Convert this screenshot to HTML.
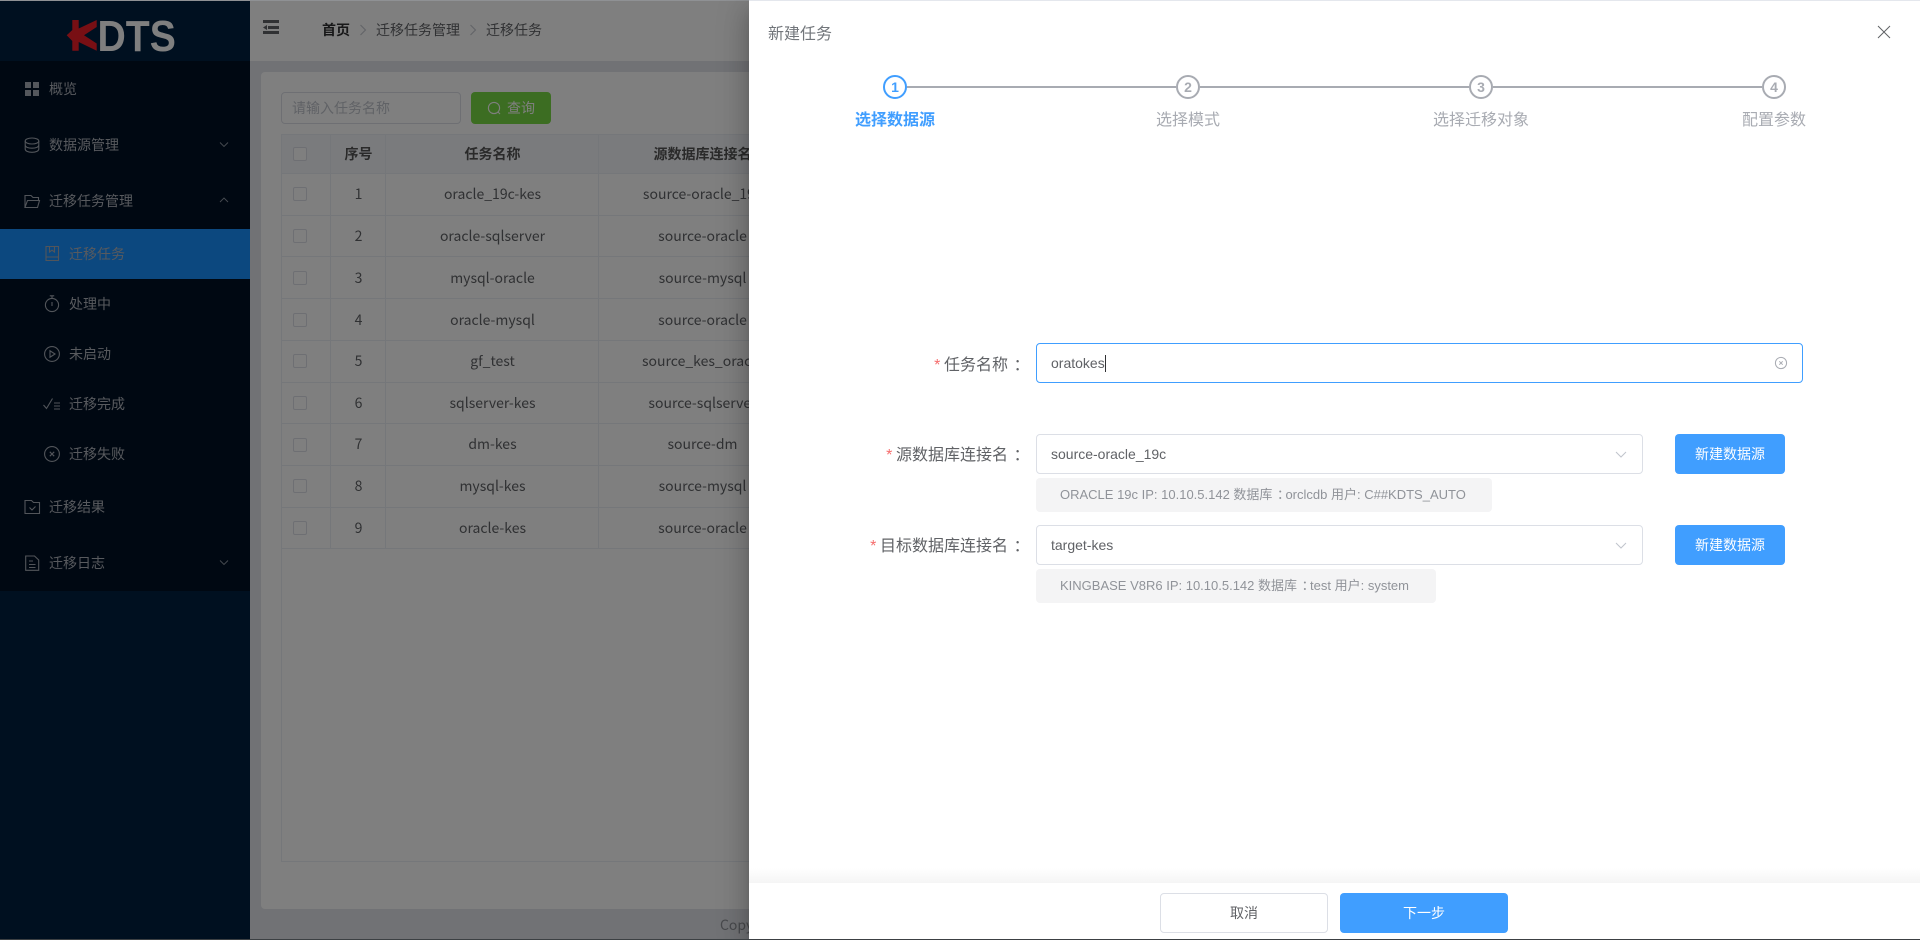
<!DOCTYPE html>
<html lang="zh-CN">
<head>
<meta charset="utf-8">
<title>KDTS</title>
<style>
html,body{margin:0;padding:0;width:1920px;height:940px;overflow:hidden;background:#fff}
body{font-family:"Liberation Sans","Noto Sans CJK SC",sans-serif;font-size:14px;color:#606266;position:relative}
.a{position:absolute;white-space:nowrap}
svg{position:absolute;overflow:visible}
#sb{left:0;top:0;width:250px;height:940px;background:#002040}
#logo{left:0;top:0;width:250px;height:61px;background:#002040}
#menu{left:0;top:61px;width:250px;height:530px;background:#001125}
#act{left:0;top:229px;width:250px;height:50px;background:#1890ff}
.m{left:49px;height:20px;line-height:20px;color:#b0b4bc;font-family:"Noto Sans CJK SC",sans-serif}
.s{left:69px}
.i{fill:none;stroke:#a4aab4;stroke-width:1.1}
#hdr{left:250px;top:0;width:1670px;height:61px;background:#fff}
#mainbg{left:250px;top:61px;width:1670px;height:879px;background:#e2e5ea}
#card{left:261px;top:72px;width:1640px;height:837px;background:#fff;border-radius:4px}
.bc{top:20px;height:20px;line-height:20px;font-family:"Noto Sans CJK SC",sans-serif;color:#606266}
#tbl{left:281px;top:134px;width:1620px;height:728px;border:1px solid #ebeef5;box-sizing:border-box}
#th{left:281px;top:134px;width:1620px;height:40px;background:#f5f7fa}
.hl{left:281px;width:1620px;height:1px;background:#ebeef5}
.vl{top:134px;width:1px;height:414px;background:#ebeef5}
.cb{left:293px;width:14px;height:14px;box-sizing:border-box;border:1px solid #dcdfe6;border-radius:2px;background:#fff}
.th{top:144px;height:20px;line-height:20px;text-align:center;font-weight:700;color:#555;font-family:"Noto Sans CJK SC",sans-serif}
.td{height:20px;line-height:20px;text-align:center;color:#606266;font-family:"Noto Sans CJK SC",sans-serif}
.n{left:331px;width:55px}
.t{left:386px;width:213px}
.c{left:599px;width:207px}
#ov{left:0;top:0;width:1920px;height:940px;background:rgba(0,0,0,.5)}
#dr{left:749px;top:0;width:1171px;height:940px;background:#fff;box-shadow:0 8px 10px -5px rgba(0,0,0,.2),0 16px 24px 2px rgba(0,0,0,.14),0 6px 30px 5px rgba(0,0,0,.12)}
.ln{top:86px;height:2px;background:#a8abb2}
.ci{top:75px;width:24px;height:24px;box-sizing:border-box;border:2px solid #a8abb2;border-radius:50%;background:#fff;color:#a8abb2;font-weight:700;font-size:14px;line-height:20px;text-align:center}
.lb{top:107px;height:22px;line-height:22px;font-size:16px;color:#a8abb2;text-align:center;width:160px;font-family:"Noto Sans CJK SC",sans-serif}
.lab{height:24px;line-height:24px;font-size:16px;color:#606266;text-align:right;right:896px;font-family:"Noto Sans CJK SC",sans-serif}
.lab b{color:#f56c6c;font-weight:400;font-family:"Liberation Sans",sans-serif}
.tc{position:relative;left:.35em}
.box{left:1036px;height:40px;box-sizing:border-box;border:1px solid #dcdfe6;border-radius:4px;background:#fff}
.val{left:1051px;height:20px;line-height:20px;color:#606266}
.hint{left:1036px;height:34px;background:#f4f4f5;border-radius:4px}
.ht{left:1060px;height:20px;line-height:20px;font-size:13px;color:#909399;font-family:"Liberation Sans","Noto Sans CJK SC",sans-serif}
.btn{height:40px;line-height:40px;text-align:center;border-radius:4px;background:#409eff;color:#fff;font-family:"Noto Sans CJK SC",sans-serif}
</style>
</head>
<body>

<div class="a" id="sb"></div>
<div class="a" id="logo"></div>
<div class="a" id="menu"></div>
<div class="a" id="act"></div>

<svg style="left:0;top:0" width="250" height="61">
  <path fill="#f01e28" d="M72.3 20H78.7V28.5L96.7 20V27L84 35.3L96.7 43.5V50.7L78.7 42V50.7H72.3V41L66.7 35.3L72.3 30Z"/>
  <text x="0" y="0" transform="translate(97.5 51) scale(.89 1)" font-family="Liberation Sans" font-weight="700" font-size="44" fill="#fff">DTS</text>
</svg>

<!-- sidebar icons -->
<svg style="left:0;top:0" width="250" height="600">
  <g fill="#a8aeb8"><rect x="25" y="82" width="6" height="6"/><rect x="33" y="82" width="6" height="6"/><rect x="25" y="90" width="6" height="6"/><rect x="33" y="90" width="6" height="6"/></g>
  <g class="i">
    <ellipse cx="32" cy="141" rx="6.8" ry="3"/>
    <path d="M25.2 141V149C25.2 151 28 152.3 32 152.3S38.8 151 38.8 149V141M25.2 145C25.2 147 28 148.2 32 148.2S38.8 147 38.8 145"/>
    <path d="M25 207.5V195.5H31L33 197.5H38.5V200.5M25 207.5H37.5L39.5 200.5H27.5L25 207.5Z"/>
    <path d="M46 246.5H58.5V260.5H46ZM46 257H58.5M49.5 246.5V252L52 250.2L54.5 252V246.5"/>
    <circle cx="52" cy="305" r="6.6"/><path d="M52 298.4V296M49.8 295.8H54.2M52 302V306"/>
    <circle cx="52" cy="354" r="7.4"/><path d="M50 350.8V357.2L55 354Z"/>
    <path d="M43.5 405L46.5 408.5L52.5 398.5M54 403H60M54 406H60M54 409H60"/>
    <circle cx="52" cy="454" r="7.4"/><path d="M49.8 451.8L54.2 456.2M54.2 451.8L49.8 456.2"/>
    <path d="M25 513.5V500.5H31.5L33.5 502.5H39.5V513.5ZM29.5 507.5L32 510L35.5 506.5"/>
    <path d="M25.7 556H34.5L38.7 560V570.3H25.7ZM29 561H33M29 564.5H35.5M29 567.5H35.5"/>
    <path d="M220 142.5L224 146.5L228 142.5M220 202L224 198L228 202M220 560.5L224 564.5L228 560.5" stroke="#8f96a2" stroke-width=".9"/>
  </g>
</svg>

<div class="a m" style="top:79px">概览</div>
<div class="a m" style="top:135px">数据源管理</div>
<div class="a m" style="top:191px">迁移任务管理</div>
<div class="a m s" style="top:244px">迁移任务</div>
<div class="a m s" style="top:294px">处理中</div>
<div class="a m s" style="top:344px">未启动</div>
<div class="a m s" style="top:394px">迁移完成</div>
<div class="a m s" style="top:444px">迁移失败</div>
<div class="a m" style="top:497px">迁移结果</div>
<div class="a m" style="top:553px">迁移日志</div>

<!-- header -->
<div class="a" id="hdr"></div>
<svg style="left:0;top:0" width="300" height="61">
  <g fill="#606266"><rect x="263" y="20" width="16" height="3"/><rect x="268" y="26" width="11" height="3"/><path d="M263 27.5L267 25V30Z"/><rect x="263" y="31" width="16" height="3"/></g>
</svg>
<div class="a bc" style="left:322px;font-weight:700;color:#303133">首页</div>
<svg style="left:0;top:0" width="560" height="61"><path d="M360.5 25L365.5 30L360.5 35M470.5 25L475.5 30L470.5 35" fill="none" stroke="#c0c4cc" stroke-width="1"/></svg>
<div class="a bc" style="left:376px">迁移任务管理</div>
<div class="a bc" style="left:486px">迁移任务</div>

<!-- main -->
<div class="a" id="mainbg"></div>
<div class="a" id="card"></div>
<div class="a" style="left:281px;top:92px;width:180px;height:32px;box-sizing:border-box;border:1px solid #dcdfe6;border-radius:4px;background:#fff"></div>
<div class="a" style="left:292px;top:98px;height:20px;line-height:20px;color:#c0c4cc;font-family:'Noto Sans CJK SC',sans-serif">请输入任务名称</div>
<div class="a" style="left:471px;top:92px;width:80px;height:32px;border-radius:4px;background:#78da44"></div>
<svg style="left:0;top:0" width="560" height="130"><circle cx="494" cy="108" r="5.6" fill="none" stroke="#fff" stroke-width="1.1"/><path d="M498 112L500 114" stroke="#fff" stroke-width="1.1"/></svg>
<div class="a" style="left:507px;top:98px;height:20px;line-height:20px;color:#fff;font-family:'Noto Sans CJK SC',sans-serif">查询</div>

<div class="a" id="th"></div>
<div class="a" id="tbl"></div>
<div class="a hl" style="top:173px"></div>
<div class="a hl" style="top:215px"></div>
<div class="a hl" style="top:256px"></div>
<div class="a hl" style="top:298px"></div>
<div class="a hl" style="top:340px"></div>
<div class="a hl" style="top:382px"></div>
<div class="a hl" style="top:423px"></div>
<div class="a hl" style="top:465px"></div>
<div class="a hl" style="top:507px"></div>
<div class="a hl" style="top:548px"></div>
<div class="a vl" style="left:330px"></div>
<div class="a vl" style="left:385px"></div>
<div class="a vl" style="left:598px"></div>

<div class="a cb" style="top:147px"></div>
<div class="a th n">序号</div>
<div class="a th t">任务名称</div>
<div class="a th c">源数据库连接名</div>

<div class="a cb" style="top:187px"></div><div class="a td n" style="top:184px">1</div><div class="a td t" style="top:184px">oracle_19c-kes</div><div class="a td c" style="top:184px">source-oracle_19c</div>
<div class="a cb" style="top:229px"></div><div class="a td n" style="top:226px">2</div><div class="a td t" style="top:226px">oracle-sqlserver</div><div class="a td c" style="top:226px">source-oracle</div>
<div class="a cb" style="top:271px"></div><div class="a td n" style="top:268px">3</div><div class="a td t" style="top:268px">mysql-oracle</div><div class="a td c" style="top:268px">source-mysql</div>
<div class="a cb" style="top:313px"></div><div class="a td n" style="top:310px">4</div><div class="a td t" style="top:310px">oracle-mysql</div><div class="a td c" style="top:310px">source-oracle</div>
<div class="a cb" style="top:354px"></div><div class="a td n" style="top:351px">5</div><div class="a td t" style="top:351px">gf_test</div><div class="a td c" style="top:351px">source_kes_oracle</div>
<div class="a cb" style="top:396px"></div><div class="a td n" style="top:393px">6</div><div class="a td t" style="top:393px">sqlserver-kes</div><div class="a td c" style="top:393px">source-sqlserver</div>
<div class="a cb" style="top:438px"></div><div class="a td n" style="top:434px">7</div><div class="a td t" style="top:434px">dm-kes</div><div class="a td c" style="top:434px">source-dm</div>
<div class="a cb" style="top:479px"></div><div class="a td n" style="top:476px">8</div><div class="a td t" style="top:476px">mysql-kes</div><div class="a td c" style="top:476px">source-mysql</div>
<div class="a cb" style="top:521px"></div><div class="a td n" style="top:518px">9</div><div class="a td t" style="top:518px">oracle-kes</div><div class="a td c" style="top:518px">source-oracle</div>

<div class="a" style="left:720px;top:915px;height:20px;line-height:20px;color:#909399;font-family:'Noto Sans CJK SC',sans-serif">Copyright</div>

<div class="a" id="ov"></div>
<div class="a" style="left:0;top:0;width:749px;height:1px;background:#8f9194"></div>

<!-- drawer -->
<div class="a" id="dr"></div>
<div class="a" style="left:749px;top:0;width:1171px;height:1px;background:#e4e7ed"></div>
<div class="a" style="left:768px;top:21px;height:22px;line-height:22px;font-size:16px;color:#72767b;font-family:'Noto Sans CJK SC',sans-serif">新建任务</div>
<svg style="left:0;top:0" width="1920" height="60"><path d="M1878 26L1890 38M1890 26L1878 38" stroke="#606266" stroke-width="1" fill="none"/></svg>

<div class="a ln" style="left:907px;width:269px"></div>
<div class="a ln" style="left:1200px;width:269px"></div>
<div class="a ln" style="left:1493px;width:269px"></div>
<div class="a ci" style="left:883px;border-color:#409eff;color:#409eff">1</div>
<div class="a ci" style="left:1176px">2</div>
<div class="a ci" style="left:1469px">3</div>
<div class="a ci" style="left:1762px">4</div>
<div class="a lb" style="left:815px;color:#409eff;font-weight:700">选择数据源</div>
<div class="a lb" style="left:1108px">选择模式</div>
<div class="a lb" style="left:1401px">选择迁移对象</div>
<div class="a lb" style="left:1694px">配置参数</div>

<div class="a lab" style="top:351px"><b>*</b> 任务名称<span class="tc">：</span></div>
<div class="a" style="left:1036px;top:343px;width:767px;height:40px;box-sizing:border-box;border:1px solid #409eff;border-radius:4px;background:#fff"></div>
<div class="a val" style="top:353px">oratokes</div>
<div class="a" style="left:1105px;top:355px;width:1px;height:17px;background:#303133"></div>
<svg style="left:0;top:0" width="1920" height="400"><circle cx="1781" cy="363" r="5.6" fill="none" stroke="#a8abb2" stroke-width="1"/><path d="M1779.3 361.3L1782.7 364.7M1782.7 361.3L1779.3 364.7" stroke="#a8abb2" stroke-width="1"/></svg>

<div class="a lab" style="top:441px"><b>*</b> 源数据库连接名<span class="tc">：</span></div>
<div class="a box" style="top:434px;width:607px"></div>
<div class="a val" style="top:444px">source-oracle_19c</div>
<div class="a hint" style="top:478px;width:456px"></div>
<div class="a ht" style="top:485px">ORACLE 19c IP: 10.10.5.142 数据库<span class="tc">：</span>orclcdb 用户: C##KDTS_AUTO</div>
<div class="a btn" style="left:1675px;top:434px;width:110px">新建数据源</div>

<div class="a lab" style="top:532px"><b>*</b> 目标数据库连接名<span class="tc">：</span></div>
<div class="a box" style="top:525px;width:607px"></div>
<div class="a val" style="top:535px">target-kes</div>
<div class="a hint" style="top:569px;width:400px"></div>
<div class="a ht" style="top:576px">KINGBASE V8R6 IP: 10.10.5.142 数据库<span class="tc">：</span>test 用户: system</div>
<div class="a btn" style="left:1675px;top:525px;width:110px">新建数据源</div>

<svg style="left:0;top:0" width="1920" height="600"><path d="M1616 452L1621 457L1626 452M1616 543L1621 548L1626 543" fill="none" stroke="#c0c4cc" stroke-width="1"/></svg>

<div class="a" style="left:749px;top:868px;width:1171px;height:15px;background:linear-gradient(rgba(245,245,245,0),#f5f5f5)"></div>
<div class="a" style="left:1160px;top:893px;width:168px;height:40px;box-sizing:border-box;border:1px solid #dcdfe6;border-radius:4px;background:#fff;text-align:center;line-height:38px;color:#606266;font-family:'Noto Sans CJK SC',sans-serif">取消</div>
<div class="a btn" style="left:1340px;top:893px;width:168px">下一步</div>

<div class="a" style="left:0;top:939px;width:1920px;height:1px;background:#3c4043"></div>
</body>
</html>
